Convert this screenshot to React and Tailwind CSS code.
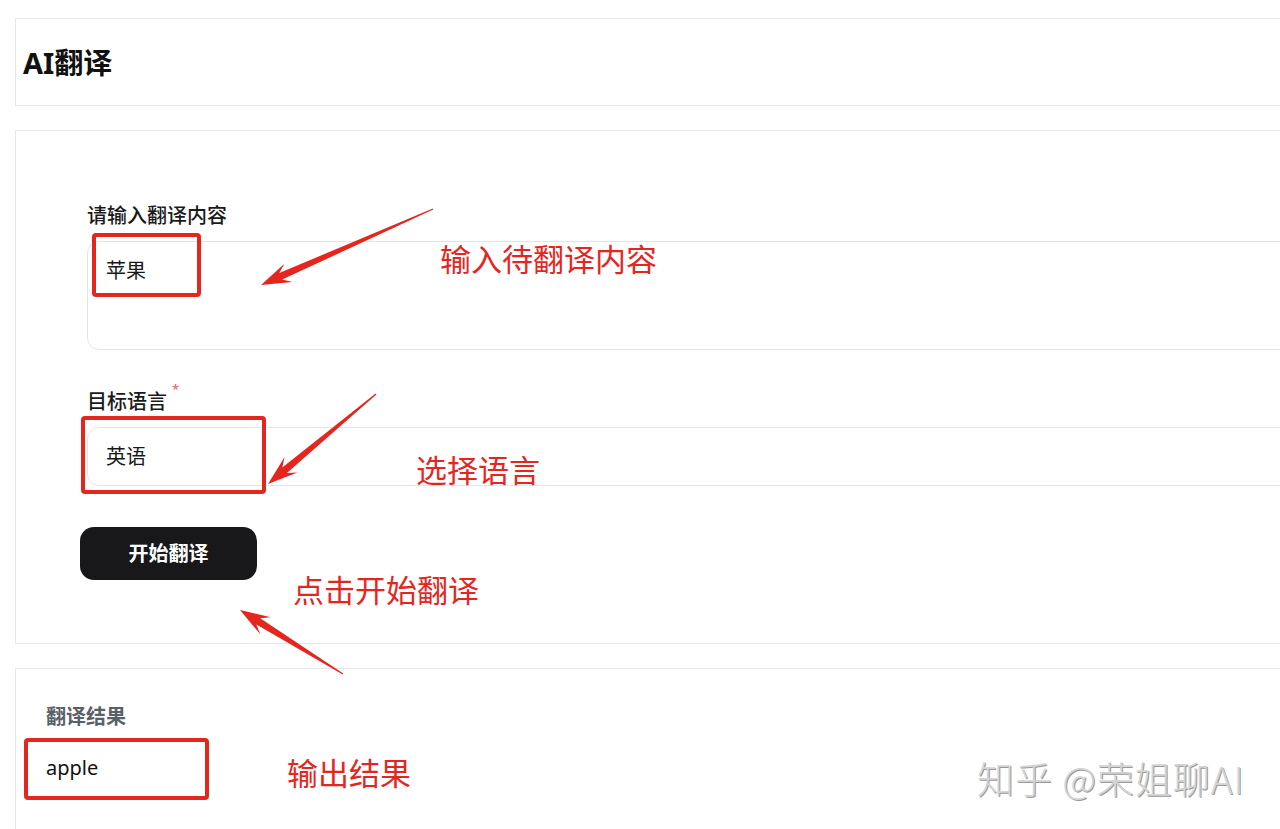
import React from 'react';

const RED = '#e5261f';

// tapered red arrow, tail -> tip
function arrowPoints(tail, tip) {
  const dx = tip[0] - tail[0];
  const dy = tip[1] - tail[1];
  const len = Math.hypot(dx, dy);
  const ux = dx / len;
  const uy = dy / len;
  const nx = -uy;
  const ny = ux;
  const L = 30;
  const at = (d, w) => [tip[0] - ux * d + nx * w, tip[1] - uy * d + ny * w];
  const pts = [
    [tail[0] + nx * 0.6, tail[1] + ny * 0.6],
    at(L * 0.72, 3.6),
    at(L, 10),
    tip,
    at(L, -10),
    at(L * 0.72, -3.6),
    [tail[0] - nx * 0.6, tail[1] - ny * 0.6],
  ];
  return pts.map((p) => p.map((v) => v.toFixed(1)).join(',')).join(' ');
}

const arrows = [
  { tail: [433, 209], tip: [261, 285] },
  { tail: [376, 394], tip: [268, 484] },
  { tail: [343, 674], tip: [240, 610] },
];

const notes = [
  { text: '输入待翻译内容', cls: 'left-[440px] top-[241px]' },
  { text: '选择语言', cls: 'left-[416px] top-[452px]' },
  { text: '点击开始翻译', cls: 'left-[293px] top-[572px]' },
  { text: '输出结果', cls: 'left-[287px] top-[755px]' },
];

const boxes = [
  'left-[92px] top-[233px] h-[64px] w-[109px]',
  'left-[81px] top-[416px] h-[78px] w-[185px]',
  'left-[24px] top-[738px] h-[62px] w-[185px]',
];

export default function App() {
  return (
    <div className="relative h-[829px] w-[1280px] overflow-hidden bg-white font-['Noto_Sans','Noto_Sans_CJK_SC',sans-serif] text-[#18181b]">
      <div className="flex w-[1300px] flex-col gap-[24px] pl-[15px] pt-[18px]">
        {/* Header */}
        <div className="flex h-[88px] items-center border border-[#e6e6e6] pl-[7px]">
          <h1 className="text-[29px] font-bold leading-none text-[#111]">AI翻译</h1>
        </div>

        {/* Form */}
        <div className="flex h-[514px] flex-col border border-[#e6e6e6] pl-[71px] pt-[71px]">
          <div className="flex flex-col gap-[11px]">
            <label className="text-[20px] font-medium leading-[28px] text-[#1a1a1a]">请输入翻译内容</label>
            <div className="h-[109px] rounded-xl border border-[#e4e4e7] pl-[18px] pt-[15px] text-[20px] leading-[28px]">
              苹果
            </div>
          </div>

          <div className="mt-[38px] flex flex-col gap-[11px]">
            <label className="flex h-[28px] items-start text-[20px] font-medium leading-[28px] text-[#1a1a1a]">
              目标语言
              <span className="ml-[5px] mt-[-5px] text-[13px] leading-none text-[#e26b6b]">*</span>
            </label>
            <div className="flex h-[59px] items-center rounded-xl border border-[#e4e4e7] pl-[18px] text-[20px] leading-[28px]">
              英语
            </div>
          </div>

          <button className="-ml-[7px] mt-[41px] flex h-[53px] w-[177px] items-center justify-center rounded-[14px] bg-[#18181b] text-[20px] font-bold text-white">
            开始翻译
          </button>
        </div>

        {/* Result */}
        <div className="flex h-[200px] flex-col gap-[23px] border border-[#e6e6e6] pl-[30px] pt-[34px]">
          <div className="text-[20px] font-semibold leading-[28px] text-[#5b6068]">翻译结果</div>
          <div className="text-[20px] leading-[28px] text-[#111]">apple</div>
        </div>
      </div>

      {/* Annotations */}
      {boxes.map((b, i) => (
        <div key={i} className={`absolute rounded-[4px] border-4 border-[#e5261f] ${b}`} />
      ))}

      <svg className="pointer-events-none absolute inset-0" width="1280" height="829">
        {arrows.map((a, i) => (
          <polygon key={i} points={arrowPoints(a.tail, a.tip)} fill={RED} />
        ))}
      </svg>

      {notes.map((n) => (
        <div
          key={n.text}
          className={`absolute font-['Noto_Sans_CJK_SC',sans-serif] text-[31px] leading-[34px] text-[#e5261f] ${n.cls}`}
        >
          {n.text}
        </div>
      ))}

      <div className="absolute left-[977px] top-[758px] font-['Noto_Sans_CJK_SC',sans-serif] text-[37px] font-light leading-[40px] tracking-[1px] text-[#d4d4d4] [text-shadow:1px_1px_0_#9a9a9a]">
        知乎 @荣姐聊AI
      </div>
    </div>
  );
}
